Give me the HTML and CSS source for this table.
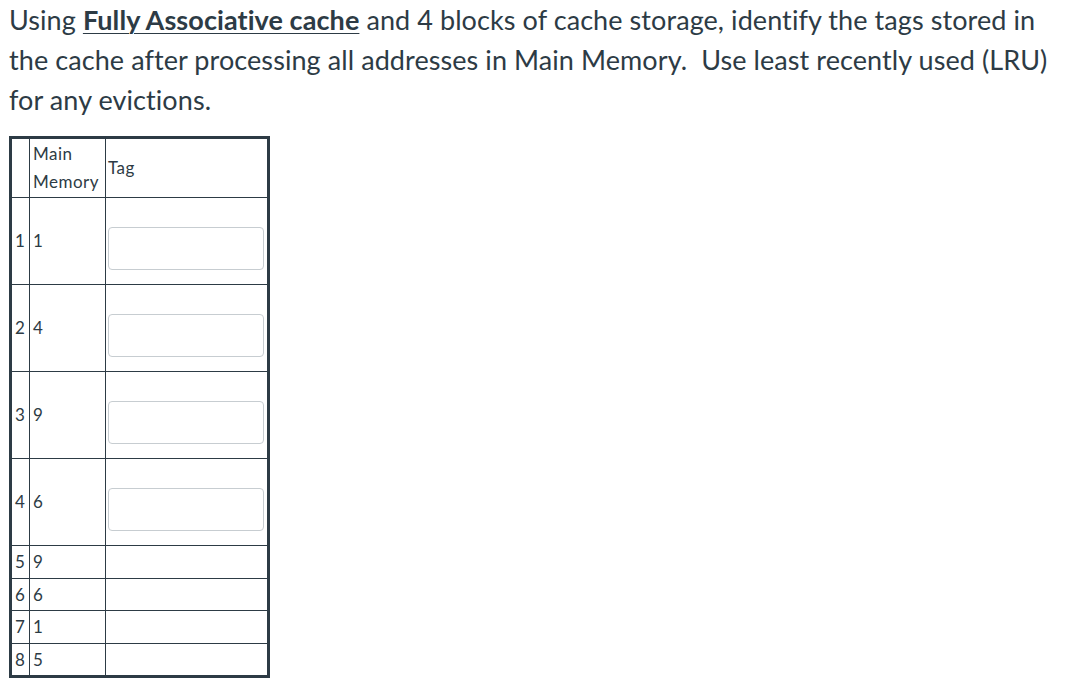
FILE: index.html
```html
<!DOCTYPE html>
<html>
<head>
<meta charset="utf-8">
<link rel="stylesheet" href="styles.css">
</head>
<body>
<div class="page">
  <p class="question">Using <strong class="key">Fully Associative cache</strong> and 4 blocks of cache storage, identify the tags stored in<br>the cache after processing all addresses in Main Memory.&nbsp; Use least recently used (LRU)<br>for any evictions.</p>
  <table class="cache">
    <tr class="head">
      <td class="idx"></td>
      <td class="mem">Main<br>Memory</td>
      <td class="tag">Tag</td>
    </tr>
    <tr class="tall"><td class="idx">1</td><td class="mem">1</td><td class="tag"><input class="answer" type="text"></td></tr>
    <tr class="tall"><td class="idx">2</td><td class="mem">4</td><td class="tag"><input class="answer" type="text"></td></tr>
    <tr class="tall"><td class="idx">3</td><td class="mem">9</td><td class="tag"><input class="answer" type="text"></td></tr>
    <tr class="tall"><td class="idx">4</td><td class="mem">6</td><td class="tag"><input class="answer" type="text"></td></tr>
    <tr><td class="idx">5</td><td class="mem">9</td><td class="tag"></td></tr>
    <tr><td class="idx">6</td><td class="mem">6</td><td class="tag"></td></tr>
    <tr><td class="idx">7</td><td class="mem">1</td><td class="tag"></td></tr>
    <tr><td class="idx">8</td><td class="mem">5</td><td class="tag"></td></tr>
  </table>
</div>
</body>
</html>
```
FILE: styles.css
```css
html, body {
  margin: 0;
  padding: 0;
  background: #ffffff;
}
body {
  font-family: Lato, "Open Sans", sans-serif;
  color: #2d3b45;
}
.page {
  padding: 0 9px;
}
.question {
  margin: 0 0 16px 0;
  font-size: 27px;
  letter-spacing: 0.08px;
  line-height: 40px;
  white-space: nowrap;
}
.key {
  font-weight: bold;
  text-decoration: underline;
  text-decoration-thickness: 1px;
  text-underline-offset: 3px;
}
.cache {
  border-collapse: collapse;
  border: 3px solid #2d3b45;
  font-size: 17px;
  letter-spacing: 0.5px;
  line-height: 27.5px;
}
.cache td {
  border: 1px solid #2d3b45;
  padding: 2px 3px;
  vertical-align: middle;
}
.cache td.idx {
  padding: 2px 2px 2px 3px;
  width: 12px;
}
.cache td.mem {
  padding: 2px 2px 2px 3px;
  width: 70px;
}
.cache td.tag {
  width: 156px;
  padding: 2px 3px 2px 2px;
}
.cache .head td {
  padding-top: 1px;
}
.answer {
  display: block;
  box-sizing: border-box;
  width: 156px;
  height: 43px;
  margin: 27px 0 12px 0;
  border: 1px solid #c7cdd1;
  border-radius: 4px;
  background: #ffffff;
  font: inherit;
}
```
